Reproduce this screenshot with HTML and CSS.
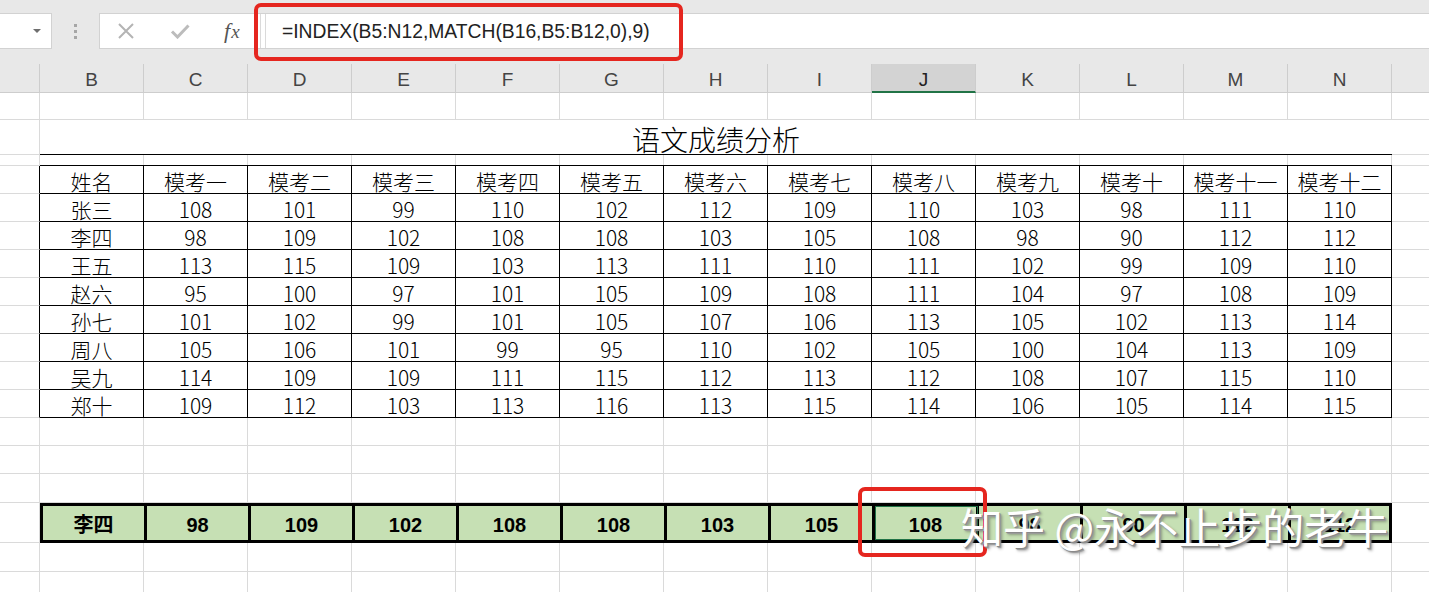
FILE: index.html
```html
<!DOCTYPE html>
<html lang="zh-CN">
<head>
<meta charset="utf-8">
<title>语文成绩分析</title>
<link rel="stylesheet" href="styles.css">
</head>
<body>
<div class="toolbar">
  <div class="namebox"><span class="caret"></span></div>
  <div class="grip"><span></span><span></span><span></span></div>
  <div class="fbox">
    <div class="fbtns">
      <svg class="ic-x" width="18" height="18" viewBox="0 0 18 18"><path d="M2 2L16 16M16 2L2 16" stroke="#b4b4b4" stroke-width="2" fill="none"/></svg>
      <svg class="ic-ok" width="20" height="16" viewBox="0 0 20 16"><path d="M2 8.5L7.5 14L18.5 2.5" stroke="#bcbcbc" stroke-width="3" fill="none"/></svg>
      <span class="fx"><i>f</i><i class="x">x</i></span>
    </div>
    <div class="finput">=INDEX(B5:N12,MATCH(B16,B5:B12,0),9)</div>
  </div>
  <div class="redbox"></div>
</div>

<div class="colhead">
  <div></div><div>B</div><div>C</div><div>D</div><div>E</div><div>F</div><div>G</div><div>H</div><div>I</div><div class="on">J</div><div>K</div><div>L</div><div>M</div><div>N</div><div class="tail"></div>
</div>

<div class="sheet">
  <div class="row h27"><div class="full"></div></div>
  <div class="row h35"><div class="a"></div><div class="title">语文成绩分析</div><div></div></div>
  <div class="row h11"><div class="a"></div><div class="span tb"></div><div></div></div>

  <div class="row h28 tr"><div class="a"></div><div class="c">姓名</div><div class="c">模考一</div><div class="c">模考二</div><div class="c">模考三</div><div class="c">模考四</div><div class="c">模考五</div><div class="c">模考六</div><div class="c">模考七</div><div class="c">模考八</div><div class="c">模考九</div><div class="c">模考十</div><div class="c">模考十一</div><div class="c">模考十二</div><div></div></div>
  <div class="row h28 tr"><div class="a"></div><div class="c">张三</div><div class="c">108</div><div class="c">101</div><div class="c">99</div><div class="c">110</div><div class="c">102</div><div class="c">112</div><div class="c">109</div><div class="c">110</div><div class="c">103</div><div class="c">98</div><div class="c">111</div><div class="c">110</div><div></div></div>
  <div class="row h28 tr"><div class="a"></div><div class="c">李四</div><div class="c">98</div><div class="c">109</div><div class="c">102</div><div class="c">108</div><div class="c">108</div><div class="c">103</div><div class="c">105</div><div class="c">108</div><div class="c">98</div><div class="c">90</div><div class="c">112</div><div class="c">112</div><div></div></div>
  <div class="row h28 tr"><div class="a"></div><div class="c">王五</div><div class="c">113</div><div class="c">115</div><div class="c">109</div><div class="c">103</div><div class="c">113</div><div class="c">111</div><div class="c">110</div><div class="c">111</div><div class="c">102</div><div class="c">99</div><div class="c">109</div><div class="c">110</div><div></div></div>
  <div class="row h28 tr"><div class="a"></div><div class="c">赵六</div><div class="c">95</div><div class="c">100</div><div class="c">97</div><div class="c">101</div><div class="c">105</div><div class="c">109</div><div class="c">108</div><div class="c">111</div><div class="c">104</div><div class="c">97</div><div class="c">108</div><div class="c">109</div><div></div></div>
  <div class="row h28 tr"><div class="a"></div><div class="c">孙七</div><div class="c">101</div><div class="c">102</div><div class="c">99</div><div class="c">101</div><div class="c">105</div><div class="c">107</div><div class="c">106</div><div class="c">113</div><div class="c">105</div><div class="c">102</div><div class="c">113</div><div class="c">114</div><div></div></div>
  <div class="row h28 tr"><div class="a"></div><div class="c">周八</div><div class="c">105</div><div class="c">106</div><div class="c">101</div><div class="c">99</div><div class="c">95</div><div class="c">110</div><div class="c">102</div><div class="c">105</div><div class="c">100</div><div class="c">104</div><div class="c">113</div><div class="c">109</div><div></div></div>
  <div class="row h28 tr"><div class="a"></div><div class="c">吴九</div><div class="c">114</div><div class="c">109</div><div class="c">109</div><div class="c">111</div><div class="c">115</div><div class="c">112</div><div class="c">113</div><div class="c">112</div><div class="c">108</div><div class="c">107</div><div class="c">115</div><div class="c">110</div><div></div></div>
  <div class="row h28 tr"><div class="a"></div><div class="c">郑十</div><div class="c">109</div><div class="c">112</div><div class="c">103</div><div class="c">113</div><div class="c">116</div><div class="c">113</div><div class="c">115</div><div class="c">114</div><div class="c">106</div><div class="c">105</div><div class="c">114</div><div class="c">115</div><div></div></div>

  <div class="row h28"><div class="full"></div></div>
  <div class="row h28"><div class="full"></div></div>
  <div class="row h29"><div class="full"></div></div>

  <div class="row h40 tk"><div class="a"></div><div class="c">李四</div><div class="c">98</div><div class="c">109</div><div class="c">102</div><div class="c">108</div><div class="c">108</div><div class="c">103</div><div class="c">105</div><div class="c sel">108<span class="mark"></span></div><div class="c">98</div><div class="c">90</div><div class="c">112</div><div class="c last">112</div><div></div></div>

  <div class="row h29"><div class="full"></div></div>
  <div class="row h29"><div class="full"></div></div>

  <div class="watermark">知乎 @永不止步的老牛</div>
</div>
</body>
</html>
```

FILE: styles.css
```css
html, body {
  margin: 0;
  padding: 0;
  background: #fff;
  overflow: hidden;
}

body {
  font-family: "Liberation Sans", "Noto Sans CJK SC", sans-serif;
  color: #000;
}

/* ---------- formula toolbar ---------- */
.toolbar {
  position: relative;
  height: 64px;
  box-sizing: border-box;
  padding-top: 13px;
  background: #e8e8e8;
  display: flex;
  align-items: flex-start;
}

.namebox {
  width: 52px;
  height: 36px;
  box-sizing: border-box;
  background: #fff;
  border: 1px solid #d2d2d2;
  border-left: 0;
  display: flex;
  align-items: center;
  justify-content: flex-end;
  padding-right: 10px;
}

.caret {
  width: 0;
  height: 0;
  border-left: 4px solid transparent;
  border-right: 4px solid transparent;
  border-top: 4px solid #6e6e6e;
}

.grip {
  width: 47px;
  height: 36px;
  display: flex;
  flex-direction: column;
  align-items: center;
  justify-content: center;
  gap: 3px;
}

.grip span {
  width: 3px;
  height: 3px;
  background: #a6a6a6;
}

.fbox {
  flex: 1;
  height: 36px;
  box-sizing: border-box;
  display: flex;
  background: #fff;
  border: 1px solid #d2d2d2;
  border-right: 0;
}

.fbtns {
  width: 161px;
  box-sizing: border-box;
  display: flex;
  align-items: center;
  padding-left: 17px;
  border-right: 1px solid #dadada;
}

.ic-ok {
  margin-left: 35px;
}

.fx {
  margin-left: 34px;
  font-family: "Liberation Serif", serif;
  font-size: 22px;
  color: #555;
  line-height: 1;
}

.fx .x {
  font-size: 19px;
  margin-left: 1px;
}

.finput {
  flex: 1;
  margin-left: 4px;
  border-left: 1px solid #dadada;
  padding-left: 16px;
  font-size: 19.3px;
  line-height: 35px;
  color: #222;
  white-space: nowrap;
}

.redbox {
  position: absolute;
  left: 254px;
  top: 3px;
  width: 429px;
  height: 58px;
  box-sizing: border-box;
  border: 4px solid #e5261f;
  border-radius: 7px;
}

/* ---------- column header ---------- */
.colhead {
  display: grid;
  grid-template-columns: 40px repeat(13, 104px) 1fr;
  height: 29px;
  background: #e8e8e8;
}

.colhead > div {
  box-sizing: border-box;
  border-right: 1px solid #cdcdcd;
  border-bottom: 1px solid #cdcdcd;
  display: flex;
  align-items: center;
  justify-content: center;
  font-size: 19px;
  color: #444;
  padding-top: 4px;
}

.colhead > .tail {
  border-right: 0;
}

.colhead > .on {
  background: #d3d3d3;
  border-bottom: 2px solid #217346;
  color: #222;
}

/* ---------- sheet ---------- */
.sheet {
  position: relative;
  background-image: linear-gradient(to right, #dadada 0, #dadada 1px, transparent 1px);
  background-size: 104px 100%;
  background-position: 39px 0;
  background-repeat: repeat-x;
}

.row {
  display: grid;
  grid-template-columns: 40px repeat(13, 104px) 1fr;
}

.row > div {
  box-sizing: border-box;
  border-bottom: 1px solid #dadada;
}

.row > .full {
  grid-column: 1 / -1;
}

.row > .span {
  grid-column: 2 / 15;
}

.h11 { height: 11px; }
.h27 { height: 27px; }
.h28 { height: 28px; }
.h29 { height: 29px; }
.h35 { height: 35px; }
.h40 { height: 40px; }

.row > .title {
  grid-column: 2 / 15;
  background: #fff;
  border-bottom: 1px solid #000;
  display: flex;
  align-items: center;
  justify-content: center;
  font-family: "Noto Sans CJK SC", sans-serif;
  font-weight: 300;
  font-size: 28px;
  line-height: 1;
  padding-top: 4px;
}

.row > .tb {
  border-bottom-color: #000;
}

/* data table */
.tr > .a {
  border-right: 1px solid #000;
}

.tr > .c {
  border-right: 1px solid #000;
  border-bottom: 1px solid #000;
  display: flex;
  align-items: center;
  justify-content: center;
  font-family: "Noto Sans CJK SC", sans-serif;
  font-weight: 300;
  font-size: 21px;
  line-height: 1;
  padding-top: 3px;
  white-space: nowrap;
}

/* highlighted result row */
.tk > .c {
  background: #c6e0b4;
  border-top: 3px solid #000;
  border-bottom: 3px solid #000;
  border-left: 3px solid #000;
  display: flex;
  align-items: center;
  justify-content: center;
  font-weight: bold;
  font-size: 20px;
  line-height: 1;
  padding-top: 3px;
}

.tk > .c.last {
  border-right: 3px solid #000;
}

.tk > .sel {
  position: relative;
}

.tk > .sel::after {
  content: "";
  position: absolute;
  left: 0;
  top: 0;
  right: -2px;
  bottom: 0;
  border: 1px solid #217346;
}

.mark {
  position: absolute;
  left: -17px;
  top: -19px;
  width: 129px;
  height: 70px;
  box-sizing: border-box;
  border: 4px solid #e5261f;
  border-radius: 7px;
  z-index: 2;
}

.watermark {
  position: absolute;
  left: 961px;
  top: 408px;
  z-index: 3;
  font-family: "Noto Sans CJK SC", sans-serif;
  font-size: 42px;
  line-height: 50px;
  color: #fff;
  white-space: nowrap;
  text-shadow: 1px 1px 0 #8a8a8a, 2px 2px 1px #9a9a9a, 3px 3px 3px rgba(0, 0, 0, 0.3);
}
```
